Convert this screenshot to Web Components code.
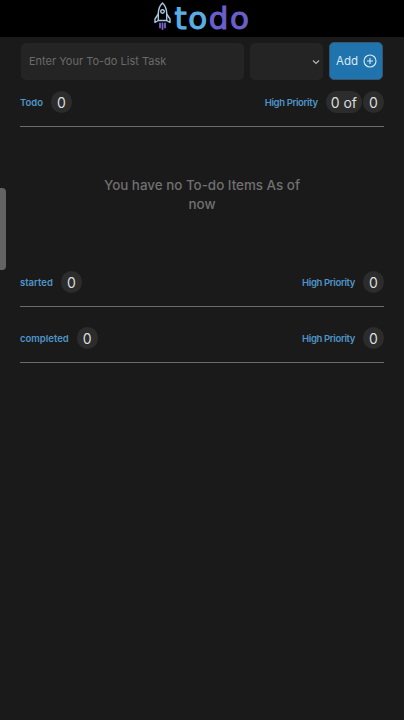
<!DOCTYPE html>
<html>
<head>
<meta charset="utf-8">
<title>todo</title>
<style>
html, body {
	margin: 0;
	height: 100%;
	background: #1a1a1a;
	overflow: hidden;
}
</style>
</head>
<body>
<template id="todo-header-tpl">
	<style>
	:host {
		display: flex;
		justify-content: center;
		align-items: flex-start;
		height: 37px;
		background: #000;
		gap: 4px;
	}
	svg {
		width: 17px;
		height: 28px;
		margin-top: 2px;
	}
	.word {
		font: 400 31px/36px "DejaVu Sans", "Liberation Sans", sans-serif;
		letter-spacing: 1.5px;
		-webkit-text-stroke: 1.1px;
	}
	.a { color: #5aaee6; }
	.b { color: #6a5fcb; }
	</style>
	<svg viewBox="0 0 17 28" fill="none" stroke="#a9c8e0" stroke-width="1.4" stroke-linejoin="round" stroke-linecap="round">
		<path d="M8.500 1C5.400 4 4.300 8 4.300 12v6.500h8.400V12C12.700 8 11.600 4 8.500 1z"/>
		<circle cx="8.500" cy="9.500" r="1.800"/>
		<path d="M4.300 12 1 17v3.500l3.300-2M12.700 12l3.300 5v3.500l-3.300-2"/>
		<path d="M6 21.500v4M8.500 21.500v5.500M11 21.500v4" stroke="#7a63d0" stroke-width="1.800"/>
	</svg>
	<span class="word"><span class="a">to</span><span class="b">do</span></span>
</template>

<template id="add-task-tpl">
	<style>
	:host {
		display: flex;
		align-items: stretch;
		gap: 6px;
		height: 37px;
		padding: 6px 21px 0 21px;
		font-family: "Inter", "Liberation Sans", sans-serif;
	}
	.field {
		flex: 0 0 223px;
		box-sizing: border-box;
		background: #242424;
		border-radius: 5px;
		color: #6a6a6a;
		font-size: 11px;
		line-height: 37px;
		padding-left: 8px;
	}
	.select {
		flex: 0 0 73px;
		background: #242424;
		border-radius: 5px;
		display: flex;
		align-items: center;
		justify-content: flex-end;
		padding-right: 2px;
		box-sizing: border-box;
	}
	.select svg {
		width: 8px;
		height: 6px;
		margin-right: 1px;
	}
	button {
		flex: 1;
		margin: -1px 0 0 0;
		padding: 0 5px 0 6px;
		border: 1px solid #39536a;
		border-radius: 5px;
		background: #1f74ad;
		color: #dce9f2;
		font: 400 11.500px "Inter", "Liberation Sans", sans-serif;
		display: flex;
		align-items: center;
		justify-content: space-between;
	}
	button svg {
		width: 14px;
		height: 14px;
	}
	</style>
	<div class="field">Enter Your To-do List Task</div>
	<div class="select">
		<svg viewBox="0 0 8 6" fill="none" stroke="#b5b5b5" stroke-width="1.200"><path d="M1 1.500 4 4.500 7 1.500"/></svg>
	</div>
	<button>Add
		<svg viewBox="0 0 14 14" fill="none" stroke="#dce9f2" stroke-width="1.100"><circle cx="7" cy="7" r="6"/><path d="M7 4v6M4 7h6"/></svg>
	</button>
</template>

<template id="count-badge-tpl">
	<style>
	:host {
		display: inline-flex;
		align-items: center;
		justify-content: center;
		box-sizing: border-box;
		min-width: 21px;
		height: 22px;
		padding: 0 5px;
		border-radius: 11px;
		background: #2c2c2c;
		color: #dcdcdc;
		font: 400 14px "Inter", "Liberation Sans", sans-serif;
	}
	</style>
	<slot></slot>
</template>

<template id="status-row-tpl">
	<style>
	:host {
		display: block;
		margin: 0 20px;
		font-family: "Inter", "Liberation Sans", sans-serif;
	}
	.row {
		display: flex;
		align-items: center;
		justify-content: space-between;
		height: 22px;
		padding-bottom: 13px;
		border-bottom: 1px solid #6b6b6b;
	}
	.side {
		display: flex;
		align-items: center;
		gap: 8px;
	}
	.label {
		color: #4f95c8;
		font-size: 9.500px;
		font-weight: 600;
	}
	.high {
		letter-spacing: -0.35px;
	}
	.counts {
		display: flex;
		gap: 1px;
	}
	</style>
	<div class="row">
		<div class="side"><span class="label" id="name"></span><slot name="count"></slot></div>
		<div class="side"><span class="label high">High Priority</span><span class="counts"><slot name="high"></slot></span></div>
	</div>
</template>

<template id="empty-note-tpl">
	<style>
	:host {
		display: block;
		width: 210px;
		margin: 0 auto;
		color: #707070;
		font: 500 13.400px/19px "Inter", "Liberation Sans", sans-serif;
		text-align: center;
	}
	</style>
	<slot></slot>
</template>

<template id="side-handle-tpl">
	<style>
	:host {
		position: absolute;
		left: 0;
		top: 188px;
		width: 6px;
		height: 82px;
		background: #636363;
		border-radius: 0 4px 4px 0;
	}
	</style>
</template>

<todo-header></todo-header>
<add-task></add-task>
<status-row name="Todo" style="margin-top:11px">
	<count-badge slot="count">0</count-badge>
	<count-badge slot="high">0 of</count-badge>
	<count-badge slot="high">0</count-badge>
</status-row>
<empty-note style="margin-top:49px">You have no To-do Items As of now</empty-note>
<status-row name="started" style="margin-top:57px">
	<count-badge slot="count">0</count-badge>
	<count-badge slot="high">0</count-badge>
</status-row>
<status-row name="completed" style="margin-top:20px">
	<count-badge slot="count">0</count-badge>
	<count-badge slot="high">0</count-badge>
</status-row>
<side-handle></side-handle>

<script>
(function(){
	function define(tag, tplId, init) {
		var template = document.getElementById(tplId);
		customElements.define(tag, class extends HTMLElement {
			constructor() {
				super();
				var clone = document.importNode(template.content, true);
				var shadow = this.attachShadow({mode: 'open'});
				shadow.appendChild(clone);
				if (init) init(this, shadow);
			}
		});
	}
	define("todo-header", "todo-header-tpl");
	define("add-task", "add-task-tpl");
	define("count-badge", "count-badge-tpl");
	define("empty-note", "empty-note-tpl");
	define("side-handle", "side-handle-tpl");
	define("status-row", "status-row-tpl", function(el, shadow) {
		shadow.getElementById("name").textContent = el.getAttribute("name");
	});
})();
</script>
</body>
</html>
